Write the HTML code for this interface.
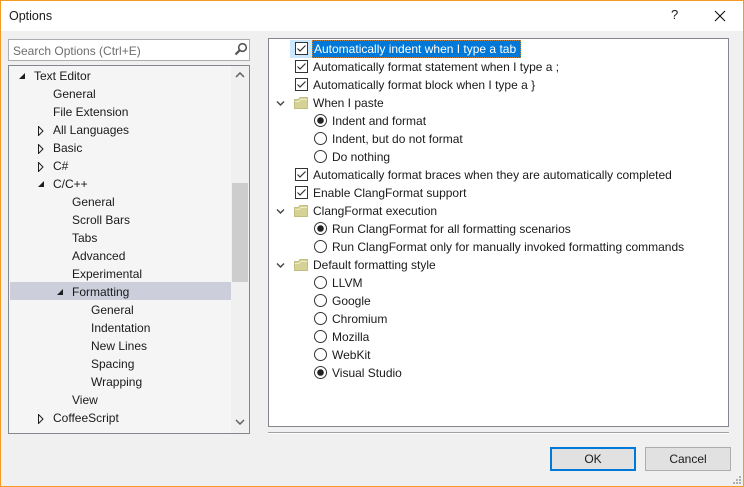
<!DOCTYPE html>
<html><head><meta charset="utf-8"><style>
*{margin:0;padding:0;box-sizing:border-box}
body{width:744px;height:487px;overflow:hidden;font-family:"Liberation Sans",sans-serif;font-size:12px;color:#1a1a1a;background:#f0f0f0;position:relative}
.frame{position:absolute;left:0;top:0;width:744px;height:487px;border:1px solid #f59a23;pointer-events:none;z-index:10}
.title{position:absolute;left:0;top:0;width:744px;height:31px;background:#fff}
.a{position:absolute;white-space:nowrap}
.t{position:absolute;white-space:nowrap;height:18px;line-height:18px;margin-top:1px}
svg{position:absolute}
</style></head><body>
<div class="title"></div>
<div class="a" style="left:9px;top:9px;font-size:12.5px">Options</div>
<div class="a" style="left:671px;top:7px;font-size:13px">?</div>
<svg style="left:714px;top:10px" width="12" height="12"><path d="M1 1L11 11M11 1L1 11" stroke="#111" stroke-width="1.1"/></svg>

<!-- search -->
<div class="a" style="left:8px;top:39px;width:242px;height:22px;background:#fff;border:1px solid #abadb3"></div>
<div class="a" style="left:13px;top:44px;color:#6d6d6d">Search Options (Ctrl+E)</div>
<svg style="left:234px;top:42px" width="14" height="14" viewBox="0 0 14 14"><circle cx="8.5" cy="5.5" r="3.8" fill="none" stroke="#555" stroke-width="1.6"/><path d="M5.8 8.2L1.5 12.5" stroke="#555" stroke-width="2.2"/></svg>

<!-- tree -->
<div class="a" style="left:8px;top:65px;width:242px;height:369px;background:#f5f5f5;border:1px solid #828790"></div>
<div class="a" style="left:231px;top:66px;width:18px;height:367px;background:#f0f0f0"></div>
<div class="a" style="left:232px;top:183px;width:16px;height:99px;background:#cdcdcd"></div>
<svg style="left:235px;top:72px" width="10" height="6"><path d="M1 5L5 1L9 5" fill="none" stroke="#606060" stroke-width="1.5"/></svg>
<svg style="left:235px;top:419px" width="10" height="6"><path d="M1 1L5 5L9 1" fill="none" stroke="#606060" stroke-width="1.5"/></svg>
<div class="a" style="left:10px;top:282px;width:221px;height:18px;background:#cccedb"></div>

<svg style="left:19px;top:73px" width="7" height="7"><path d="M6 0L6 6L0 6Z" fill="#1e1e1e"/></svg>
<div class="t" style="left:34px;top:66px">Text Editor</div>
<div class="t" style="left:53px;top:84px">General</div>
<div class="t" style="left:53px;top:102px">File Extension</div>
<svg style="left:38px;top:126px" width="6" height="10"><path d="M0.5 0.5L5 5L0.5 9.5Z" fill="none" stroke="#1e1e1e"/></svg>
<div class="t" style="left:53px;top:120px">All Languages</div>
<svg style="left:38px;top:144px" width="6" height="10"><path d="M0.5 0.5L5 5L0.5 9.5Z" fill="none" stroke="#1e1e1e"/></svg>
<div class="t" style="left:53px;top:138px">Basic</div>
<svg style="left:38px;top:162px" width="6" height="10"><path d="M0.5 0.5L5 5L0.5 9.5Z" fill="none" stroke="#1e1e1e"/></svg>
<div class="t" style="left:53px;top:156px">C#</div>
<svg style="left:38px;top:181px" width="7" height="7"><path d="M6 0L6 6L0 6Z" fill="#1e1e1e"/></svg>
<div class="t" style="left:53px;top:174px">C/C++</div>
<div class="t" style="left:72px;top:192px">General</div>
<div class="t" style="left:72px;top:210px">Scroll Bars</div>
<div class="t" style="left:72px;top:228px">Tabs</div>
<div class="t" style="left:72px;top:246px">Advanced</div>
<div class="t" style="left:72px;top:264px">Experimental</div>
<svg style="left:57px;top:289px" width="7" height="7"><path d="M6 0L6 6L0 6Z" fill="#1e1e1e"/></svg>
<div class="t" style="left:72px;top:282px">Formatting</div>
<div class="t" style="left:91px;top:300px">General</div>
<div class="t" style="left:91px;top:318px">Indentation</div>
<div class="t" style="left:91px;top:336px">New Lines</div>
<div class="t" style="left:91px;top:354px">Spacing</div>
<div class="t" style="left:91px;top:372px">Wrapping</div>
<div class="t" style="left:72px;top:390px">View</div>
<svg style="left:38px;top:414px" width="6" height="10"><path d="M0.5 0.5L5 5L0.5 9.5Z" fill="none" stroke="#1e1e1e"/></svg>
<div class="t" style="left:53px;top:408px">CoffeeScript</div>

<!-- right panel -->
<div class="a" style="left:268px;top:38px;width:461px;height:389px;background:#fff;border:1px solid #828790"></div>
<div class="a" style="left:268px;top:432px;width:461px;height:1px;background:#a0a0a0"></div>
<div class="a" style="left:268px;top:433px;width:461px;height:1px;background:#fff"></div>

<div class="a" style="left:290px;top:40px;width:22px;height:18px;background:#cce8ff"></div>
<div class="a" style="left:312px;top:40px;width:209px;height:18px;background:#0078d7;border:1px dotted #c08040"></div>

<svg width="0" height="0"><defs>
<g id="cb"><rect x="0.5" y="0.5" width="12" height="12" fill="#fff" stroke="#333"/><path d="M2.5 6.5L5 9L10.5 3.5" fill="none" stroke="#333" stroke-width="1.2"/></g>
<g id="ro"><circle cx="6.5" cy="6.5" r="6" fill="#fff" stroke="#333"/></g>
<g id="rc"><circle cx="6.5" cy="6.5" r="6" fill="#fff" stroke="#333"/><circle cx="6.5" cy="6.5" r="3.3" fill="#222"/></g>
<g id="fd"><path d="M0.5 3.5L0.5 12.5L13.5 12.5L13.5 1.5L6 1.5L4.5 3.5Z" fill="#d6d194" stroke="#c2bd80"/><path d="M1 5.5L5 5.5L6.5 3.5L13 3.5" fill="none" stroke="#ecebc8"/></g>
<g id="cv"><path d="M1 1.5L4.5 5L8 1.5" fill="none" stroke="#444" stroke-width="1.4"/></g>
</defs></svg>

<svg style="left:295px;top:42px" width="13" height="13"><use href="#cb"/></svg>
<div class="t" style="left:314px;top:39px;color:#fff">Automatically indent when I type a tab</div>
<svg style="left:295px;top:60px" width="13" height="13"><use href="#cb"/></svg>
<div class="t" style="left:313px;top:57px">Automatically format statement when I type a ;</div>
<svg style="left:295px;top:78px" width="13" height="13"><use href="#cb"/></svg>
<div class="t" style="left:313px;top:75px">Automatically format block when I type a }</div>
<svg style="left:276px;top:100px" width="10" height="7"><use href="#cv"/></svg>
<svg style="left:294px;top:96px" width="14" height="14"><use href="#fd"/></svg>
<div class="t" style="left:313px;top:93px">When I paste</div>
<svg style="left:314px;top:114px" width="13" height="13"><use href="#rc"/></svg>
<div class="t" style="left:332px;top:111px">Indent and format</div>
<svg style="left:314px;top:132px" width="13" height="13"><use href="#ro"/></svg>
<div class="t" style="left:332px;top:129px">Indent, but do not format</div>
<svg style="left:314px;top:150px" width="13" height="13"><use href="#ro"/></svg>
<div class="t" style="left:332px;top:147px">Do nothing</div>
<svg style="left:295px;top:168px" width="13" height="13"><use href="#cb"/></svg>
<div class="t" style="left:313px;top:165px">Automatically format braces when they are automatically completed</div>
<svg style="left:295px;top:186px" width="13" height="13"><use href="#cb"/></svg>
<div class="t" style="left:313px;top:183px">Enable ClangFormat support</div>
<svg style="left:276px;top:208px" width="10" height="7"><use href="#cv"/></svg>
<svg style="left:294px;top:204px" width="14" height="14"><use href="#fd"/></svg>
<div class="t" style="left:313px;top:201px">ClangFormat execution</div>
<svg style="left:314px;top:222px" width="13" height="13"><use href="#rc"/></svg>
<div class="t" style="left:332px;top:219px">Run ClangFormat for all formatting scenarios</div>
<svg style="left:314px;top:240px" width="13" height="13"><use href="#ro"/></svg>
<div class="t" style="left:332px;top:237px">Run ClangFormat only for manually invoked formatting commands</div>
<svg style="left:276px;top:262px" width="10" height="7"><use href="#cv"/></svg>
<svg style="left:294px;top:258px" width="14" height="14"><use href="#fd"/></svg>
<div class="t" style="left:313px;top:255px">Default formatting style</div>
<svg style="left:314px;top:276px" width="13" height="13"><use href="#ro"/></svg>
<div class="t" style="left:332px;top:273px">LLVM</div>
<svg style="left:314px;top:294px" width="13" height="13"><use href="#ro"/></svg>
<div class="t" style="left:332px;top:291px">Google</div>
<svg style="left:314px;top:312px" width="13" height="13"><use href="#ro"/></svg>
<div class="t" style="left:332px;top:309px">Chromium</div>
<svg style="left:314px;top:330px" width="13" height="13"><use href="#ro"/></svg>
<div class="t" style="left:332px;top:327px">Mozilla</div>
<svg style="left:314px;top:348px" width="13" height="13"><use href="#ro"/></svg>
<div class="t" style="left:332px;top:345px">WebKit</div>
<svg style="left:314px;top:366px" width="13" height="13"><use href="#rc"/></svg>
<div class="t" style="left:332px;top:363px">Visual Studio</div>

<!-- buttons -->
<div class="a" style="left:550px;top:447px;width:86px;height:24px;background:#e1e1e1;border:2px solid #0078d7;text-align:center;line-height:21px">OK</div>
<div class="a" style="left:645px;top:447px;width:86px;height:24px;background:#e1e1e1;border:1px solid #adadad;text-align:center;line-height:23px">Cancel</div>
<svg style="left:732px;top:475px" width="10" height="10"><g fill="#b0b0b0"><rect x="7" y="1" width="2" height="2"/><rect x="4" y="4" width="2" height="2"/><rect x="7" y="4" width="2" height="2"/><rect x="1" y="7" width="2" height="2"/><rect x="4" y="7" width="2" height="2"/><rect x="7" y="7" width="2" height="2"/></g></svg>
<div class="frame"></div>
</body></html>
